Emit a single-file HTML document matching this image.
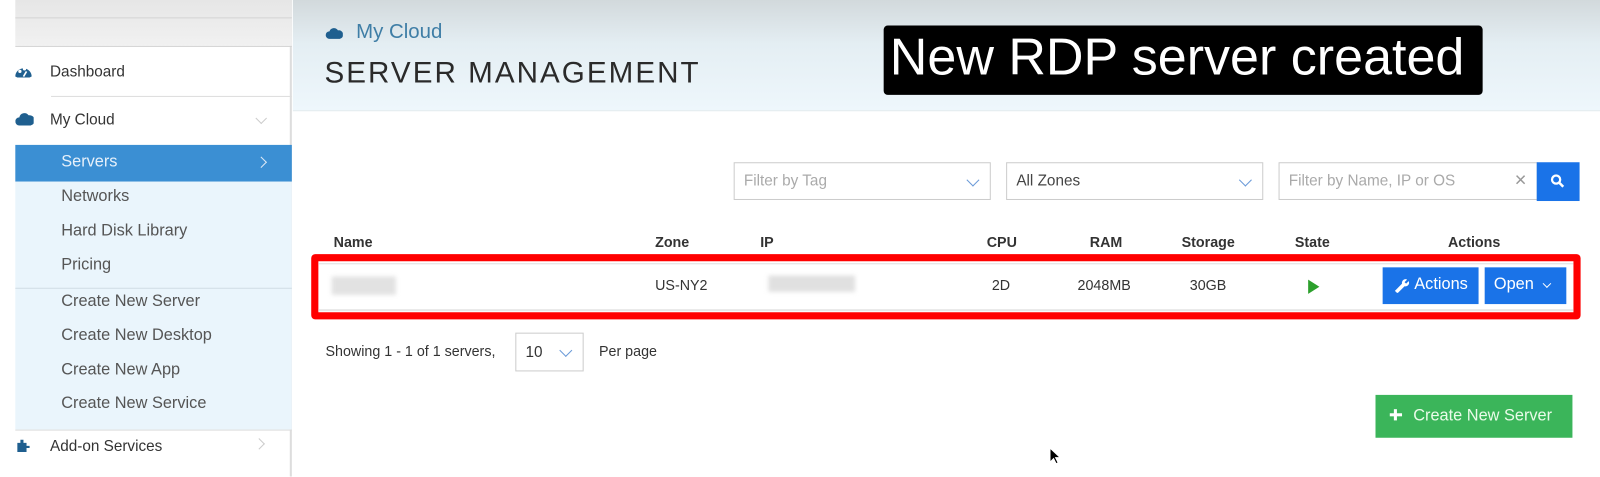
<!DOCTYPE html><html><head><style>
*{margin:0;padding:0;box-sizing:border-box}
body{width:1600px;height:467px;overflow:hidden;background:#fff;font-family:"Liberation Sans",sans-serif;color:#333}
#w{position:absolute;left:0;top:0;width:1568px;height:458px;transform:scale(1.0204);transform-origin:0 0}
.a{position:absolute}
.sb{left:15px;top:0;width:271px;height:467px;background:#fff;border-right:2px solid #ddd}
.it{position:absolute;left:60px;font-size:16px;color:#555}
.mi{position:absolute;left:49px;font-size:15px;color:#333}
.th{position:absolute;top:229px;font-size:14px;font-weight:bold;color:#333}
.td{position:absolute;top:271px;font-size:14px;color:#333}
.fb{position:absolute;top:159px;height:37px;border:1px solid #ccc;background:#fff;font-size:15px;color:#aaa;padding:9px 9px}
.chev{position:absolute;right:12px;top:12px;width:9px;height:9px;border-right:1.5px solid #6a9ad8;border-bottom:1.5px solid #6a9ad8;transform:rotate(45deg)}
</style></head><body><div id="w">
<div class="a sb">
 <div class="a" style="left:0;top:0;width:271px;height:46px;background:linear-gradient(#e6e6e6,#f1f1f1);border-bottom:1px solid #d4d4d4"></div>
 <div class="a" style="left:0;top:17px;width:271px;height:1px;background:#d4d4d4"></div>
 <div class="a" style="left:35px;top:94px;width:236px;height:1px;background:#ddd"></div>
 <div class="a" style="left:0;top:142px;width:271px;height:36px;background:#3b8fd3"></div>
 <div class="a" style="left:0;top:178px;width:271px;height:243px;background:#eaf5fc"></div>
 <div class="a" style="left:0;top:282px;width:271px;height:1px;background:#d0dce4"></div>
 <div class="a" style="left:0;top:421px;width:271px;height:1px;background:#dcdcdc"></div>
</div>
<svg class="a" style="left:14px;top:62px" width="18" height="15" viewBox="0 0 18 15"><path d="M1 13a8 8 0 0 1 16 0l-2 1H3z" fill="#1f5f8f"/><circle cx="5.5" cy="8" r="1.6" fill="#fff"/><circle cx="10" cy="5.5" r="1.6" fill="#fff"/><path d="M9 13l3-5" stroke="#fff" stroke-width="1.6"/></svg>
<div class="mi" style="top:62px">Dashboard</div>
<svg class="a" style="left:15px;top:110px" width="18" height="14" viewBox="0 0 18 14"><path d="M4 13a4 4 0 0 1 0-8a5 5 0 0 1 9-2a4 4 0 0 1 2 10z" fill="#1f5f8f"/></svg>
<div class="mi" style="top:109px">My Cloud</div>
<div class="a" style="left:252px;top:112px;width:8px;height:8px;border-right:1px solid #ccc;border-bottom:1px solid #ccc;transform:rotate(45deg)"></div>
<div class="it" style="top:150px;color:#e6f0fa">Servers</div>
<div class="a" style="left:252px;top:155px;width:8px;height:8px;border-right:1.5px solid #dce9f6;border-top:1.5px solid #dce9f6;transform:rotate(45deg)"></div>
<div class="it" style="top:184px">Networks</div>
<div class="it" style="top:218px">Hard Disk Library</div>
<div class="it" style="top:251px">Pricing</div>
<div class="it" style="top:287px">Create New Server</div>
<div class="it" style="top:320px">Create New Desktop</div>
<div class="it" style="top:354px">Create New App</div>
<div class="it" style="top:387px">Create New Service</div>
<svg class="a" style="left:15px;top:429px" width="16" height="14" viewBox="0 0 16 14"><path d="M2 14V5h3V2h3v3h3v3h3v2h-3v4z" fill="#1f5f8f"/></svg>
<div class="mi" style="top:429px">Add-on Services</div>
<div class="a" style="left:250px;top:431px;width:8px;height:8px;border-right:1px solid #ccc;border-top:1px solid #ccc;transform:rotate(45deg)"></div>

<div class="a" style="left:287px;top:0;width:1313px;height:109px;background:linear-gradient(#d2d9dc,#e4eef3 40%,#eef7fc);border-bottom:1px solid #e2eaee"></div>
<svg class="a" style="left:319px;top:27px" width="17" height="12" viewBox="0 0 18 13"><path d="M4 12a4 4 0 0 1 0-8a5 5 0 0 1 9-1a4 4 0 0 1 2 9z" fill="#1f5f8f"/></svg>
<div class="a" style="left:349px;top:20px;font-size:20px;color:#3f7ea6">My Cloud</div>
<div class="a" style="left:318px;top:56px;font-size:29px;color:#2a2a2a;letter-spacing:2px">SERVER MANAGEMENT</div>
<div class="a" style="left:866px;top:25px;width:587px;height:68px;background:#000;border-radius:4px;color:#fff;font-size:51px;padding:1px 0 0 6px;white-space:nowrap">New RDP server created</div>

<div class="fb" style="left:719px;width:252px">Filter by Tag<div class="chev"></div></div>
<div class="fb" style="left:986px;width:252px;color:#444">All Zones<div class="chev"></div></div>
<div class="fb" style="left:1253px;width:254px">Filter by Name, IP or OS<span class="a" style="right:10px;top:6px;font-size:20px;color:#999">×</span></div>
<div class="a" style="left:1506px;top:159px;width:42px;height:38px;background:#1a73e8"></div>
<svg class="a" style="left:1519px;top:170px" width="15" height="15" viewBox="0 0 15 15"><circle cx="6" cy="6" r="4" fill="none" stroke="#fff" stroke-width="2.2"/><path d="M9 9l4 4" stroke="#fff" stroke-width="2.5"/></svg>

<div class="th" style="left:327px">Name</div>
<div class="th" style="left:642px">Zone</div>
<div class="th" style="left:745px">IP</div>
<div class="th" style="left:967px">CPU</div>
<div class="th" style="left:1068px">RAM</div>
<div class="th" style="left:1158px">Storage</div>
<div class="th" style="left:1269px">State</div>
<div class="th" style="left:1419px">Actions</div>

<div class="a" style="left:305px;top:249px;width:1244px;height:64px;border:7px solid #ff0000;border-radius:4px"></div>
<div class="a" style="left:312px;top:258px;width:1230px;height:1px;background:#ddd"></div>
<div class="a" style="left:312px;top:303px;width:1230px;height:2px;background:#e6e6e6"></div>
<div class="a" style="left:325px;top:271px;width:63px;height:18px;background:#e2e2e2;filter:blur(2px)"></div>
<div class="td" style="left:642px">US-NY2</div>
<div class="a" style="left:753px;top:270px;width:85px;height:16px;background:#e0e0e0;filter:blur(2px)"></div>
<div class="td" style="left:972px">2D</div>
<div class="td" style="left:1056px">2048MB</div>
<div class="td" style="left:1166px">30GB</div>
<div class="a" style="left:1282px;top:274px;width:0;height:0;border-left:11px solid #2ca02c;border-top:7px solid transparent;border-bottom:7px solid transparent"></div>
<div class="a" style="left:1355px;top:262px;width:94px;height:36px;background:#1a73e8;color:#fff;font-size:16px;padding:8px 0 0 31px">Actions</div>
<svg class="a" style="left:1365px;top:271px" width="16" height="16" viewBox="0 0 16 16"><path d="M2 14l7-7a3.5 3.5 0 0 1 5-4l-2.5 2.5 1.5 1.5 2.5-2.5a3.5 3.5 0 0 1-4 5l-7 7z" fill="#fff"/></svg>
<div class="a" style="left:1455px;top:262px;width:80px;height:36px;background:#1a73e8;color:#fff;font-size:16px;padding:8px 0 0 9px">Open</div>
<div class="a" style="left:1513px;top:275px;width:6px;height:6px;border-right:1.5px solid #fff;border-bottom:1.5px solid #fff;transform:rotate(45deg)"></div>

<div class="a" style="left:319px;top:336px;font-size:14px;color:#333">Showing 1 - 1 of 1 servers,</div>
<div class="a" style="left:505px;top:326px;width:67px;height:38px;border:1px solid #ccc;font-size:15px;padding:10px 0 0 9px">10<div class="chev" style="right:12px;top:12px"></div></div>
<div class="a" style="left:587px;top:336px;font-size:14px;color:#333">Per page</div>

<div class="a" style="left:1348px;top:387px;width:193px;height:42px;background:#3bb55a;color:#eafbe9;font-size:16px;padding:12px 0 0 37px">Create New Server</div>
<div class="a" style="left:1362px;top:405px;width:12px;height:3px;background:#fff"></div>
<div class="a" style="left:1366px;top:401px;width:3px;height:11px;background:#fff"></div>
<svg class="a" style="left:1028px;top:438px" width="12" height="18" viewBox="0 0 12 18"><path d="M1 1v14l3.5-3.5 2.5 5 2-1-2.5-5H11z" fill="#000" stroke="#fff" stroke-width="1"/></svg>
</div></body></html>
